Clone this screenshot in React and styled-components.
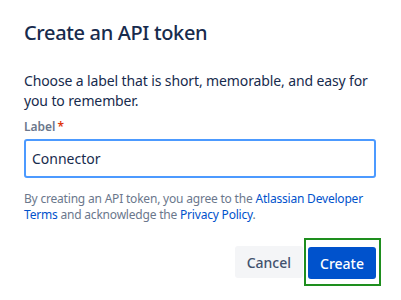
import React from 'react';
import styled, {createGlobalStyle} from 'styled-components';

const GlobalStyle = createGlobalStyle`
  html, body {
    margin: 0;
    padding: 0;
    background: #ffffff;
  }
  body {
    font-family: "Noto Sans", "Open Sans", sans-serif;
    color: #172B4D;
  }
`;

const Dialog = styled.div`
  width: 401px;
  height: 300px;
  box-sizing: border-box;
  padding: 19px 25px 0 24px;
  display: flex;
  flex-direction: column;
`;

const Title = styled.h1`
  margin: 0;
  font-size: 20px;
  line-height: 28px;
  font-weight: 500;
  letter-spacing: -0.35px;
  color: #172B4D;
`;

const Intro = styled.p`
  margin: 24px 0 0;
  font-size: 14px;
  line-height: 20px;
  letter-spacing: -0.12px;
  color: #172B4D;
`;

const FieldLabel = styled.label`
  display: block;
  margin-top: 8px;
  font-size: 12px;
  line-height: 16px;
  font-weight: 600;
  color: #6B778C;
`;

const Required = styled.span`
  color: #DE350B;
  margin-left: 2px;
`;

const TextInput = styled.input`
  display: block;
  margin-top: 4px;
  width: 100%;
  height: 39px;
  box-sizing: border-box;
  border: 2px solid #4C9AFF;
  border-radius: 3px;
  padding: 0 6px;
  font-family: inherit;
  font-size: 14px;
  color: #172B4D;
  caret-color: #172B4D;
  outline: none;
  background: #ffffff;
`;

const Help = styled.p`
  margin: 13px 0 0;
  font-size: 12px;
  line-height: 16px;
  letter-spacing: -0.2px;
  color: #6B778C;
`;

const Link = styled.a`
  color: #0052CC;
  text-decoration: none;
`;

const Footer = styled.div`
  display: flex;
  justify-content: flex-end;
  align-items: center;
  gap: 1px;
  margin-top: 15px;
  margin-right: -5px;
`;

const Button = styled.button`
  height: 32px;
  padding: 0 12px;
  border: none;
  border-radius: 3px;
  font-family: inherit;
  font-size: 14px;
  font-weight: 500;
  cursor: pointer;
  background: ${p => (p.$primary ? '#0052CC' : '#F4F5F7')};
  color: ${p => (p.$primary ? '#ffffff' : '#42526E')};
`;

const FocusRing = styled.div`
  border: 2px solid #1E8E1E;
  padding: 7px 3px 5px 2px;
  display: flex;
`;

export default function App() {
  return (
    <>
      <GlobalStyle/>
      <Dialog>
        <Title>Create an API token</Title>
        <Intro>Choose a label that is short, memorable, and easy for you to remember.</Intro>
        <FieldLabel htmlFor="label">Label<Required>*</Required></FieldLabel>
        <TextInput id="label" defaultValue="Connector" autoFocus/>
        <Help>
          By creating an API token, you agree to the <Link href="#">Atlassian Developer Terms</Link> and
          acknowledge the <Link href="#">Privacy Policy</Link>.
        </Help>
        <Footer>
          <Button>Cancel</Button>
          <FocusRing>
            <Button $primary>Create</Button>
          </FocusRing>
        </Footer>
      </Dialog>
    </>
  );
}
